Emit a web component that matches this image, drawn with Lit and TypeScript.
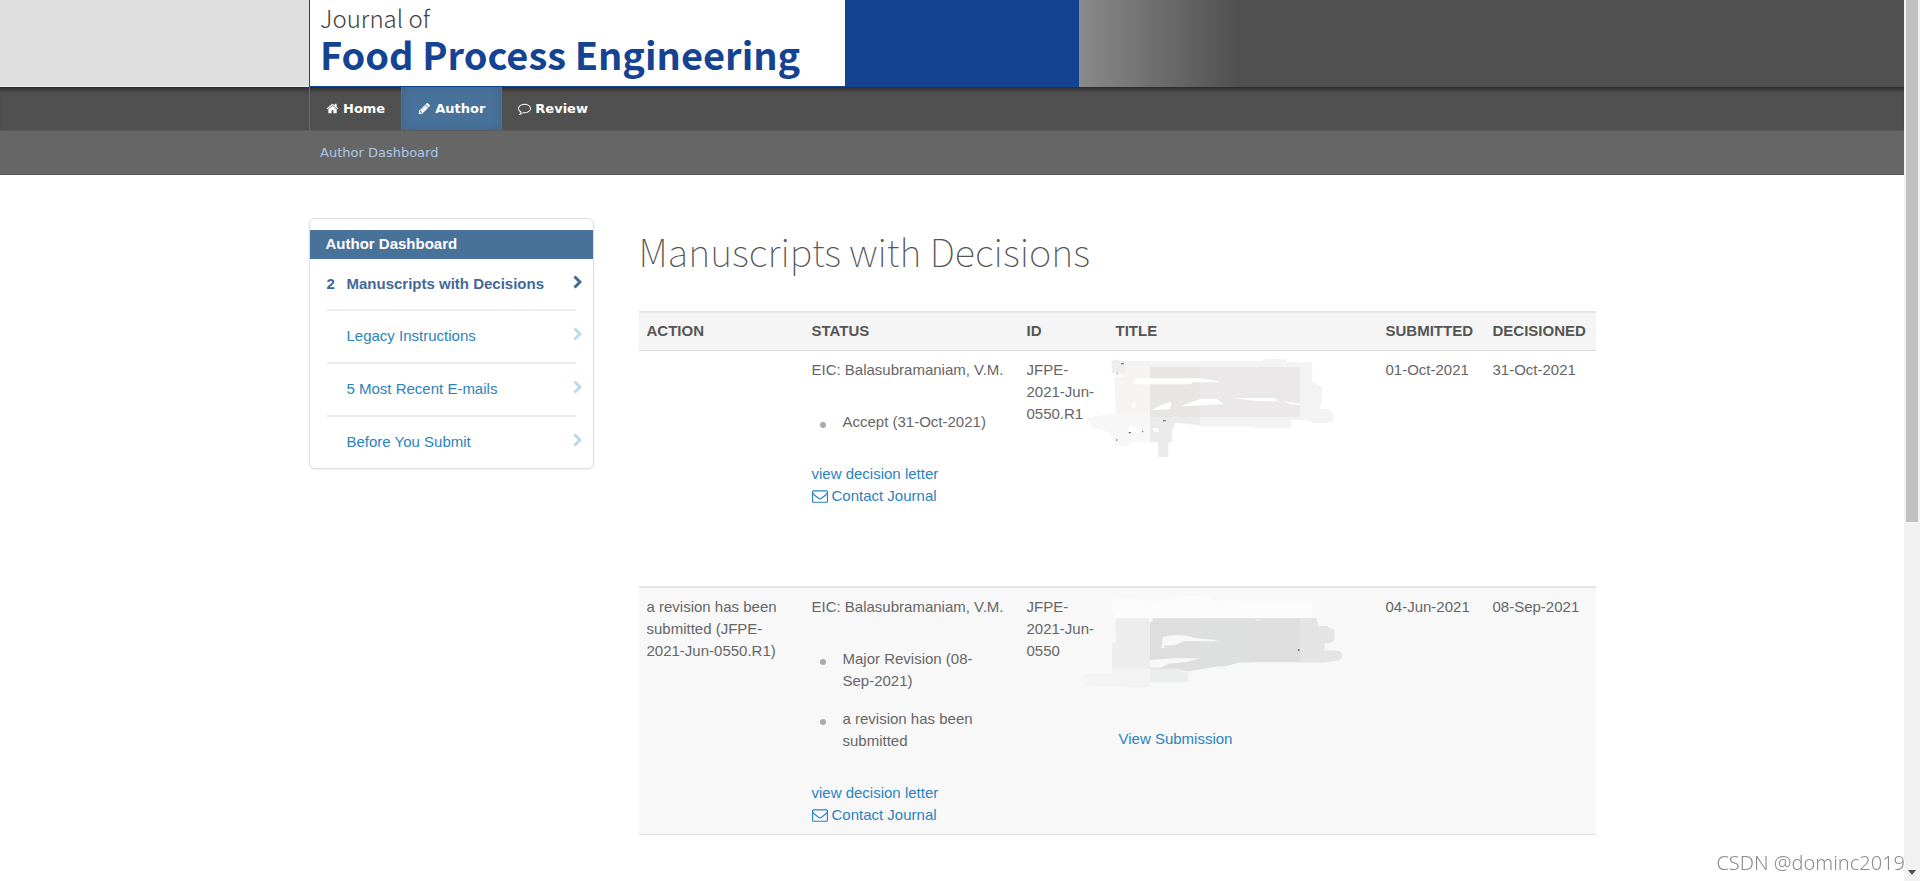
import { LitElement, html, css, svg, nothing, TemplateResult } from "lit";
import { customElement, property } from "lit/decorators.js";
import { classMap } from "lit/directives/class-map.js";

const ICONS: Record<string, string> = {
  home: "M1472 992v480q0 26-19 45t-45 19h-384v-384h-256v384h-384q-26 0-45-19t-19-45v-480q0-1 .5-3t.5-3l575-474 575 474q1 2 1 6zm223-69l-62 74q-8 9-21 11h-3q-13 0-21-7l-692-577-692 577q-12 8-24 7-13-2-21-11l-62-74q-8-10-7-23.5t11-21.5l719-599q32-26 76-26t76 26l244 204v-195q0-14 9-23t23-9h192q14 0 23 9t9 23v408l219 182q10 8 11 21.5t-7 23.5z",
  pencil: "M491 1536l91-91-235-235-91 91v107h128v128h107zm523-928q0-22-22-22-10 0-17 7l-542 542q-7 7-7 17 0 22 22 22 10 0 17-7l542-542q7-7 7-17zm-54-192l416 416-832 832h-416v-416zm683 96q0 53-37 90l-166 166-416-416 166-165q36-38 90-38 53 0 91 38l235 234q37 39 37 91z",
  comment: "M896 384q-204 0-381.5 69.5t-282 187.5-104.5 255q0 112 71.5 213.5t201.5 175.5l87 50-27 96q-24 91-70 172 152-63 275-171l43-38 57 6q69 8 130 8 204 0 381.5-69.5t282-187.5 104.5-255-104.5-255-282-187.5-381.5-69.5zm896 512q0 174-120 321.5t-326 233-450 85.5q-70 0-145-8-198 175-460 242-49 14-114 22h-5q-15 0-27-10.5t-16-27.5v-1q-3-4-.5-12t2-10 4.5-9.5l6-9 7-8.5 8-9q7-8 31-34.5t34.5-38 31-39.5 32.5-51 27-59 26-76q-157-89-247.5-220t-90.5-281q0-174 120-321.5t326-233 450-85.5 450 85.5 326 233 120 321.5z",
  envelope: "M1664 1504v-768q-32 36-69 66-268 206-426 338-51 43-83 67t-86.5 48.5-102.5 24.5h-2q-48 0-102.5-24.5t-86.5-48.5-83-67q-158-132-426-338-37-30-69-66v768q0 13 9.5 22.5t22.5 9.5h1472q13 0 22.5-9.5t9.5-22.5zm0-1051v-24.5l-.5-13-3-12.5-5.5-9-9-7.5-14-2.5h-1472q-13 0-22.5 9.5t-9.5 22.5q0 168 147 284 193 152 401 317 6 5 35 29.5t46 37.5 44.5 31.5 50.5 27.5 43 9h2q20 0 43-9t50.5-27.5 44.5-31.5 46-37.5 35-29.5q208-165 401-317 54-43 100.5-115.5t46.5-131.5zm128-37v1088q0 66-47 113t-113 47h-1472q-66 0-113-47t-47-113v-1088q0-66 47-113t113-47h1472q66 0 113 47t47 113z",
};

@customElement("fa-icon")
class FaIcon extends LitElement {
  static styles = css`
    :host { display: inline-block; width: 1em; height: 1em; }
    svg { display: block; width: 100%; height: 100%; fill: currentColor; }
  `;
  @property() name = "home";
  render() {
    return html`<svg viewBox="0 0 1792 1792" aria-hidden="true"><path d=${ICONS[this.name]}></path></svg>`;
  }
}

@customElement("site-header")
class SiteHeader extends LitElement {
  static styles = css`
    :host { display: block; }
    a { text-decoration: none; }
    .banner {
      display: grid;
      grid-template-columns: minmax(0, 1fr) minmax(0, 1286px) minmax(0, 1fr);
      height: 87px;
      background: #505050;
    }
    .left { background: #dedede; border-bottom: 1px solid #eee; box-sizing: border-box; }
    .middle { display: flex; background: linear-gradient(90deg, #8a8a8a 770px, #505050 930px); }
    .journal {
      box-sizing: border-box;
      display: flex;
      flex: 0 0 770px;
      background: #144392;
      border-left: 1px solid #144392;
      border-bottom: 1px solid #144392;
    }
    .name { flex: 0 0 535px; box-sizing: border-box; background: #fff; padding: 5px 0 0 10px; white-space: nowrap; color: #144392; font: 700 38px/46px "Noto Sans CJK SC", sans-serif; }
    .of { display: block; color: #404040; font: 300 24px/26px "Noto Sans CJK SC", sans-serif; }
    .nav { background: #505050; box-shadow: inset 0 6px 5px -4px #222; border-bottom: 1px solid #5c5c5c; }
    .inner { box-sizing: border-box; max-width: 1286px; margin: 0 auto; display: flex; }
    .nav .inner { border-left: 1px solid #6a6a6a; }
    .tab {
      display: flex;
      align-items: center;
      gap: 4px;
      height: 43px;
      padding: 0 16px;
      color: #fff;
      font: 700 13px/20px "DejaVu Sans", sans-serif;
    }
    .active { background: #49729a; border: 1px solid #6a6a6a; border-width: 0 1px; box-shadow: inset 0 0 8px #3c648c; }
    .tab fa-icon { font-size: 13px; }
    .sub { background: #666; border-bottom: 1px solid #555; }
    .sub a { padding: 12px 11px 11px; color: #a9c8e8; font: 13px/20px "DejaVu Sans", sans-serif; }
  `;
  render() {
    return html`
      <header class="banner">
        <div class="left"></div>
        <div class="middle">
          <div class="journal"><div class="name"><span class="of">Journal of</span>Food Process Engineering</div></div>
        </div>
      </header>
      <nav class="nav">
        <div class="inner">
          <a class="tab" href="#home"><fa-icon name="home"></fa-icon>Home</a>
          <a class="tab active" href="#author"><fa-icon name="pencil"></fa-icon>Author</a>
          <a class="tab" href="#review"><fa-icon name="comment"></fa-icon>Review</a>
        </div>
      </nav>
      <nav class="sub"><div class="inner"><a href="#dashboard">Author Dashboard</a></div></nav>
    `;
  }
}

@customElement("dashboard-menu")
class DashboardMenu extends LitElement {
  static styles = css`
    :host { display: block; }
    .box {
      border: 1px solid #ddd;
      border-radius: 6px;
      padding-top: 11px;
      box-shadow: 0 1px 2px #0001;
      font: 15px/20px "Liberation Sans", sans-serif;
    }
    h2 { margin: 0; padding: 4px 16px 5px; background: #49729a; color: #fff; font-size: 15px; line-height: 20px; }
    ul { list-style: none; margin: 0; padding: 0 17px; }
    li + li { border-top: 2px solid #ececec; }
    a { display: grid; grid-template-columns: 20px 1fr 9px; align-items: center; height: 50px; color: #2a83c0; text-decoration: none; margin-right: -6px; }
    li + li a { padding-bottom: 1px; }
    .current { color: #41699a; font-weight: 700; }
    svg { fill: none; stroke: #b9dcec; stroke-width: 3; margin-bottom: 5px; }
    .current svg { stroke: #41699a; }
  `;
  render() {
    const items = [["2", "Manuscripts with Decisions"], ["", "Legacy Instructions"], ["", "5 Most Recent E-mails"], ["", "Before You Submit"]];
    return html`<nav class="box">
      <h2>Author Dashboard</h2>
      <ul>
        ${items.map(([count, label]) => html`<li>
          <a href="#item" class=${classMap({ current: !!count })}>
            <span>${count}</span><span>${label}</span>
            <svg width="9" height="14" viewBox="0 0 9 14" aria-hidden="true"><path d="M1.5 1.5 7 7 1.5 12.5"></path></svg>
          </a>
        </li>`)}
      </ul>
    </nav>`;
  }
}

interface Manuscript {
  action: TemplateResult | typeof nothing;
  decisions: string[];
  id: TemplateResult;
  smudge: TemplateResult;
  submitted: string;
  decisioned: string;
  link: boolean;
}

const firstSmudge = svg`
  <path fill="#f5f4f2" d="M128 235 L133 342 L232 342 V186 H160 L145 186 Q133 176 120 188 V212 L132 222 L155 229 L150 235Z"></path>
  <path fill="#f7f7f7" d="M48 355 L133 342 H232 V430 H185 L165 441 H136 L115 403 L85 390 H65Z"></path>
  <path fill="#eeeeee" d="M120 188 Q133 176 147 190 L160 204 V222 H122Z"></path>
  <path fill="#f4f3f3" d="M160 186 H555 L565 180 H625 L632 190 H703 V247 L732 265 V305 L722 329 H745 L764 341 V366 L745 372 H705 L690 363 H642 V387 H540 L515 382 H378 L340 375 L305 370 H232 V204 H160Z"></path>
  <path fill="#eae8e8" d="M232 204 H668 V354 H232Z"></path>
  <path fill="#e8e6e5" d="M232 204 H377 V354 H232Z"></path>
  <path fill="#ebebeb" d="M232 354 H377 V376 L305 371 L293 402 H296 V430 H285 V474 H256 V430 H232Z"></path>
  <g fill="#fff">
    <path d="M189 238 H370 L431 246 L425 250 H360 L348 256 H186Z"></path>
    <path d="M239 333 Q260 315 294 309 L290 331Z"></path>
    <path d="M320 322 Q350 310 381 299 H425 L446 315 L400 318Z"></path>
    <path d="M475 297 H595 L605 307 L540 306Z"></path>
    <path d="M617 306 L668 314 V319 L640 316Z"></path>
    <path d="M180 311 L192 319 L181 332Z"></path>
    <path d="M170 380 L205 390 L208 400 H170Z"></path>
    <path d="M239 388 H257 V400 L245 397Z"></path>
  </g>
  <g fill="#555"><path d="M148 193h8v3h-8z M270 364h8v3h-8z M170 400h7v3h-7z M209 396h3v4h-3z M134 421h3v4h-3z M135 223h3v3h-3z"></path></g>
`;

const secondSmudge = svg`
  <path fill="#fcfcfc" d="M118 82 L250 92 L330 78 L405 80 V90 L703 93 V144 H132 L124 120Z"></path>
  <path fill="#ededed" d="M132 144 H232 V295 H122 V218 L133 215Z"></path>
  <path fill="#f3f3f3" d="M44 311 H118 L124 295 H232 V350 H186 L86 347 L44 345Z"></path>
  <path fill="#dedede" d="M232 144 H715 L720 167 H743 L767 179 V208 L755 219 H738 V241 H775 Q790 243 790 256 Q790 268 775 270 L740 276 H492 L450 288 H425 L345 303 L318 300 H232Z"></path>
  <path fill="#dde0df" d="M377 144 H523 V276 H492 L450 288 H425 L377 297Z"></path>
  <path fill="#e4e4e4" d="M668 144 H715 L720 167 H743 L767 179 V208 L755 219 H738 V241 H775 Q790 243 790 256 Q790 268 775 270 L740 276 H668Z"></path>
  <path fill="#ebedec" d="M232 295 H320 V306 H343 V336 H232Z"></path>
  <g fill="#f8f8f8">
    <path d="M270 199 Q310 192 342 197 L365 204 L430 210 L415 213 H330 L305 224 L273 226 V234 H265Z"></path>
    <path d="M232 269 L300 264 H377 L340 275 L285 280 L265 292 H232Z"></path>
    <path d="M535 148 H562 L548 151Z"></path>
    <path d="M228 144 H240 V152 L232 157Z"></path>
  </g>
  <path fill="#555" d="M662 237h4v5h-4z"></path>
`;

@customElement("manuscript-list")
class ManuscriptList extends LitElement {
  static styles = css`
    :host { display: block; color: #666; font: 15px/22px "Liberation Sans", sans-serif; }
    h1 { margin: 0 0 32px; color: #555; font: 100 38px/56px "Noto Sans CJK SC", sans-serif; }
    table { width: 100%; table-layout: fixed; border-collapse: separate; border-spacing: 0; }
    .action { width: 165px; }
    .status { width: 215px; }
    .id { width: 89px; }
    .submitted { width: 107px; }
    .decisioned { width: 111px; }
    th, td { box-sizing: border-box; padding: 8px; text-align: left; vertical-align: top; }
    th { padding-top: 7px; background: #f5f5f5; border-top: 2px solid #e5e5e5; border-bottom: 1px solid #ddd; color: #555; }
    td { border-bottom: 2px solid #e5e5e5; }
    tbody tr:nth-child(odd) > td { padding-bottom: 79px; }
    tbody tr:nth-child(even) > td { background: #f8f8f8; border-bottom: 1px solid #ddd; }
    ul { list-style: none; margin: 30px 0; padding: 0 8px 0 31px; }
    li { position: relative; }
    li + li { margin-top: 16px; }
    li::before { content: ""; position: absolute; left: -23px; top: 11px; width: 6px; height: 6px; border-radius: 50%; background: #aaa; }
    a { color: #2a83c0; text-decoration: none; }
    .contact { display: flex; align-items: center; gap: 4px; }
    .contact fa-icon { font-size: 16px; }
    .title { position: relative; }
    .smudge { position: absolute; left: -32px; top: 0; width: 252px; height: 130px; pointer-events: none; }
    .view { display: block; margin: 132px 0 0 3px; }
  `;
  private rows: Manuscript[] = [
    { action: nothing, decisions: ["Accept (31-Oct-2021)"], id: html`JFPE-<wbr>2021-Jun-<wbr>0550.R1`, smudge: svg`<g transform="translate(-17 -156)">${firstSmudge}</g>`, submitted: "01-Oct-2021", decisioned: "31-Oct-2021", link: false },
    { action: html`a revision has been submitted (JFPE-<wbr>2021-Jun-0550.R1)`, decisions: ["Major Revision (08-Sep-2021)", "a revision has been submitted"], id: html`JFPE-<wbr>2021-Jun-<wbr>0550`, smudge: svg`<g transform="translate(-17 -53)">${secondSmudge}</g>`, submitted: "04-Jun-2021", decisioned: "08-Sep-2021", link: true },
  ];
  render() {
    return html`
      <h1>Manuscripts with Decisions</h1>
      <table>
        <thead>
          <tr>
            <th class="action">ACTION</th><th class="status">STATUS</th><th class="id">ID</th>
            <th>TITLE</th><th class="submitted">SUBMITTED</th><th class="decisioned">DECISIONED</th>
          </tr>
        </thead>
        <tbody>
          ${this.rows.map((row) => html`<tr>
            <td>${row.action}</td>
            <td>
              EIC: Balasubramaniam, V.M.
              <ul>${row.decisions.map((d) => html`<li>${d}</li>`)}</ul>
              <a href="#letter">view decision letter</a>
              <a class="contact" href="#contact"><fa-icon name="envelope"></fa-icon>Contact Journal</a>
            </td>
            <td>${row.id}</td>
            <td class="title">
              <svg class="smudge" viewBox="0 0 732 390" preserveAspectRatio="none" overflow="visible" aria-hidden="true">${row.smudge}</svg>
              ${row.link ? html`<a class="view" href="#submission">View Submission</a>` : nothing}
            </td>
            <td>${row.submitted}</td>
            <td>${row.decisioned}</td>
          </tr>`)}
        </tbody>
      </table>
    `;
  }
}

@customElement("app-root")
class AppRoot extends LitElement {
  static styles = css`
    :host { display: grid; grid-template-columns: minmax(0, 1fr) 16px; min-height: 100vh; background: #fff; }
    .content { display: grid; grid-template-columns: 285px minmax(0, 1fr); gap: 45px; align-items: start; max-width: 1287px; margin: 0 auto; padding-top: 43px; }
    manuscript-list { padding-top: 5px; }
    .scroll { display: flex; flex-direction: column; justify-content: space-between; align-items: center; background: #f1f1f1; }
    .thumb { width: 12px; height: 59.2%; background: #c1c1c1; }
    .down { width: 8px; height: 5px; margin-bottom: 6px; background: #505050; clip-path: polygon(0 0, 100% 0, 50% 100%); }
    .mark { position: fixed; right: 15px; bottom: 4px; color: #8c8c8c; font: 300 20px/28px "Noto Sans", sans-serif; text-shadow: 1px 1px 1px #fff; }
  `;
  render() {
    return html`
      <div>
        <site-header></site-header>
        <main class="content">
          <dashboard-menu></dashboard-menu>
          <manuscript-list></manuscript-list>
        </main>
      </div>
      <div class="scroll" aria-hidden="true"><div class="thumb"></div><div class="down"></div></div>
      <div class="mark">CSDN @dominc2019</div>
    `;
  }
}
